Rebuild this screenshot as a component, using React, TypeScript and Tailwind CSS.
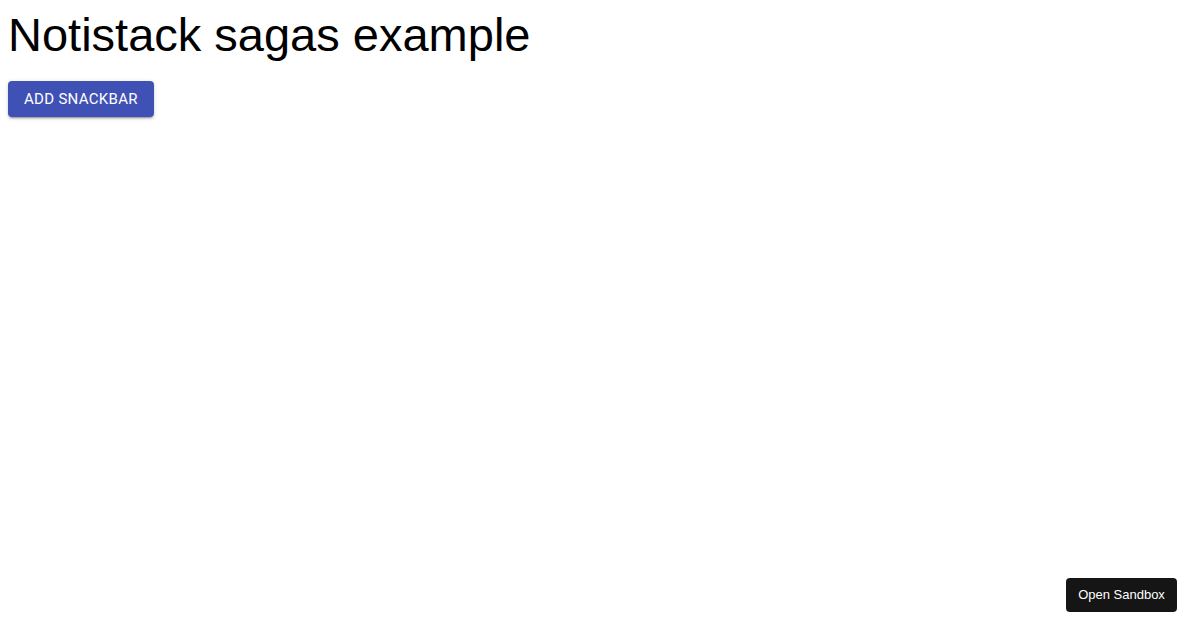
export default function App() {
  return (
    <div className="min-h-screen bg-white p-2 font-['Liberation_Sans',Arial,sans-serif] text-black">
      <h1 className="-mt-px mb-[18px] text-[47px] leading-[56px] font-normal">Notistack sagas example</h1>

      <button
        type="button"
        className="h-9 rounded px-4 bg-[#3f51b5] font-['Roboto',sans-serif] text-[15px] font-normal uppercase tracking-[0.3px] text-white shadow-[0_3px_1px_-2px_rgba(0,0,0,0.2),0_2px_2px_0_rgba(0,0,0,0.14),0_1px_5px_0_rgba(0,0,0,0.12)]"
      >
        Add snackbar
      </button>

      <a
        href="#"
        className="fixed right-[23px] bottom-[18px] flex h-[34px] w-[111px] items-center justify-center rounded bg-[#151515] text-[13px] text-white"
      >
        Open Sandbox
      </a>
    </div>
  );
}
